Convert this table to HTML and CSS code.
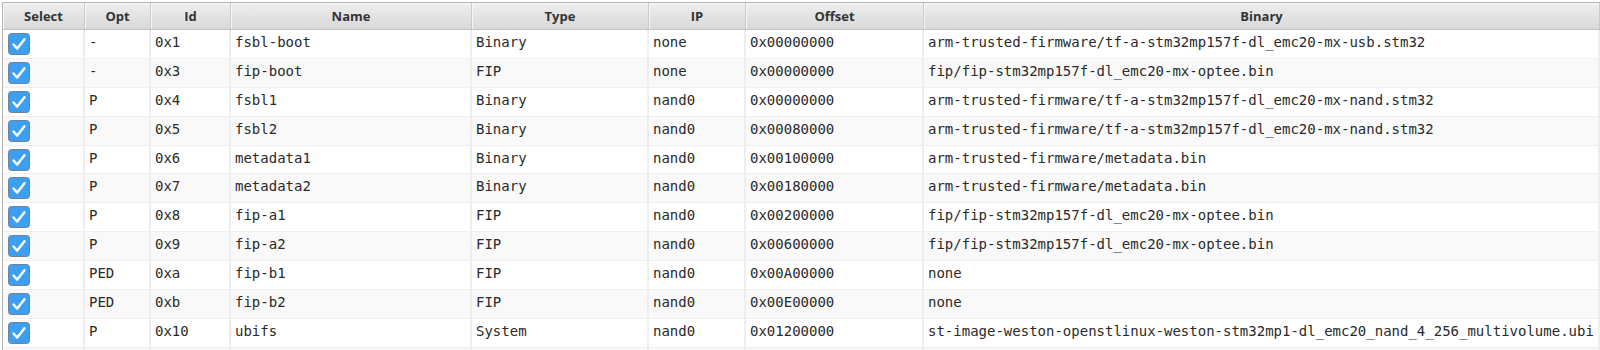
FILE: index.html
```html
<!DOCTYPE html>
<html>
<head>
<meta charset="utf-8">
<link rel="stylesheet" href="styles.css">
</head>
<body>
<div class="table">
  <div class="head">
    <div class="hc">Select</div>
    <div class="hc">Opt</div>
    <div class="hc">Id</div>
    <div class="hc">Name</div>
    <div class="hc">Type</div>
    <div class="hc">IP</div>
    <div class="hc">Offset</div>
    <div class="hc">Binary</div>
  </div>
  <div class="body" id="body"></div>
</div>
<template id="cb">
  <svg class="check" width="22" height="22" viewBox="0 0 22 22"><rect x="0.5" y="0.5" width="21" height="21" rx="3" ry="3" fill="#3c9ff1" stroke="#6c8399"/><path d="M5.5 11.5 L9.2 15.6 L16.5 6.2" fill="none" stroke="#ffffff" stroke-width="2.4" stroke-linecap="round" stroke-linejoin="round"/></svg>
</template>
<script src="app.js"></script>
</body>
</html>
```

FILE: app.js
```js
const rows = [
  ["-", "0x1", "fsbl-boot", "Binary", "none", "0x00000000", "arm-trusted-firmware/tf-a-stm32mp157f-dl_emc20-mx-usb.stm32"],
  ["-", "0x3", "fip-boot", "FIP", "none", "0x00000000", "fip/fip-stm32mp157f-dl_emc20-mx-optee.bin"],
  ["P", "0x4", "fsbl1", "Binary", "nand0", "0x00000000", "arm-trusted-firmware/tf-a-stm32mp157f-dl_emc20-mx-nand.stm32"],
  ["P", "0x5", "fsbl2", "Binary", "nand0", "0x00080000", "arm-trusted-firmware/tf-a-stm32mp157f-dl_emc20-mx-nand.stm32"],
  ["P", "0x6", "metadata1", "Binary", "nand0", "0x00100000", "arm-trusted-firmware/metadata.bin"],
  ["P", "0x7", "metadata2", "Binary", "nand0", "0x00180000", "arm-trusted-firmware/metadata.bin"],
  ["P", "0x8", "fip-a1", "FIP", "nand0", "0x00200000", "fip/fip-stm32mp157f-dl_emc20-mx-optee.bin"],
  ["P", "0x9", "fip-a2", "FIP", "nand0", "0x00600000", "fip/fip-stm32mp157f-dl_emc20-mx-optee.bin"],
  ["PED", "0xa", "fip-b1", "FIP", "nand0", "0x00A00000", "none"],
  ["PED", "0xb", "fip-b2", "FIP", "nand0", "0x00E00000", "none"],
  ["P", "0x10", "ubifs", "System", "nand0", "0x01200000", "st-image-weston-openstlinux-weston-stm32mp1-dl_emc20_nand_4_256_multivolume.ubi"]
];
const body = document.getElementById("body");
const tpl = document.getElementById("cb");
rows.forEach((r, i) => {
  const row = document.createElement("div");
  row.className = "row " + (i % 2 ? "even" : "odd");
  const sel = document.createElement("div");
  sel.className = "cell sel";
  sel.appendChild(tpl.content.cloneNode(true));
  row.appendChild(sel);
  r.forEach(v => {
    const c = document.createElement("div");
    c.className = "cell";
    c.textContent = v;
    row.appendChild(c);
  });
  body.appendChild(row);
});
const filler = document.createElement("div");
filler.className = "row even";
for (let k = 0; k < 8; k++) {
  const c = document.createElement("div");
  c.className = "cell";
  filler.appendChild(c);
}
body.appendChild(filler);
```

FILE: styles.css
```css
html, body {
  margin: 0;
  padding: 0;
  background: #ffffff;
  overflow: hidden;
}
.table {
  margin: 2px 0 0 2px;
  border-left: 1px solid #b4b4b4;
  border-top: 1px solid #b4b4b4;
  background: #ffffff;
}
.head, .row {
  display: grid;
  grid-template-columns: 82px 66px 80px 241px 177px 97px 178px 1fr;
}
.head {
  height: 26px;
  border-bottom: 1px solid #c2c2c2;
  background: linear-gradient(#f1f1f1 0%, #e7e7e7 30%, #d9d9d9 100%);
}
.hc {
  display: flex;
  align-items: center;
  justify-content: center;
  font-family: "Open Sans", "Liberation Sans", sans-serif;
  font-weight: 700;
  font-size: 13px;
  color: #333333;
  border-right: 1px solid #c9c9c9;
  box-shadow: inset 1px 1px 0 #f7f7f7;
}
.row {
  height: 28.9px;
  box-sizing: border-box;
  border-bottom: 1px solid #efefef;
}
.row.odd { background: #ffffff; }
.row.even { background: #f9f9f9; }
.cell {
  font-family: "DejaVu Sans Mono", "Liberation Mono", monospace;
  font-size: 14px;
  line-height: 16px;
  color: #2a2a2a;
  padding: 4px 0 0 4px;
  border-right: 2px solid #eeeeee;
  white-space: nowrap;
  overflow: hidden;
}
.cell.sel {
  padding: 3px 0 0 5px;
}
.check {
  display: block;
}
```
